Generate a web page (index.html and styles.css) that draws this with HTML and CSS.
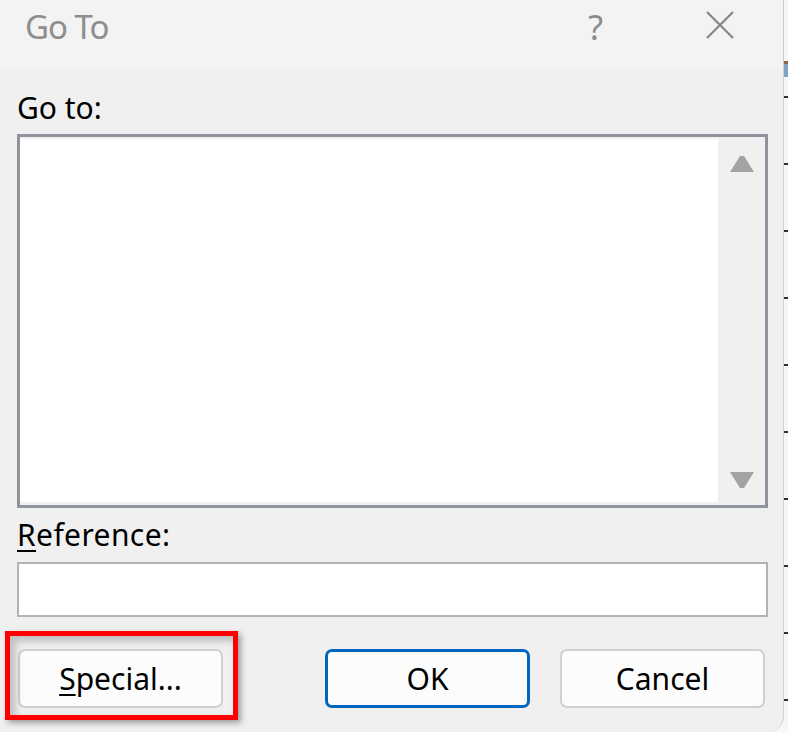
FILE: index.html
```html
<!DOCTYPE html>
<html>
<head>
<meta charset="utf-8">
<link rel="stylesheet" href="styles.css">
</head>
<body>
<div class="page">
  <div class="dialog">
    <div class="titlebar">
      <span class="title">Go To</span>
      <div class="title-actions">
        <span class="help">?</span>
        <svg class="close" width="30" height="30" viewBox="0 0 30 30"><path d="M2 2 L28 28 M28 2 L2 28" stroke="#8a8a8a" stroke-width="2.4" fill="none"/></svg>
      </div>
    </div>
    <div class="body">
      <div class="label">Go to:</div>
      <div class="listbox">
        <div class="list-area"></div>
        <div class="scrollbar">
          <svg width="24" height="18" viewBox="0 0 24 18"><path d="M10 1 L14 1 L24 17 L0 17 Z" fill="#a3a3a3"/></svg>
          <svg width="24" height="18" viewBox="0 0 24 18"><path d="M0 1 L24 1 L14 17 L10 17 Z" fill="#a3a3a3"/></svg>
        </div>
      </div>
      <div class="label label-ref"><u>R</u>eference:</div>
      <div class="input"></div>
      <div class="buttons">
        <div class="special-wrap">
          <button class="btn"><u>S</u>pecial...</button>
          <div class="highlight"></div>
        </div>
        <div class="right-buttons">
          <button class="btn btn-primary">OK</button>
          <button class="btn">Cancel</button>
        </div>
      </div>
    </div>
  </div>
  <div class="edge">
    <div class="edge-patch"></div>
    <div class="edge-marks"></div>
  </div>
</div>
</body>
</html>
```

FILE: styles.css
```css
html, body {
  margin: 0;
  padding: 0;
}
body {
  width: 788px;
  height: 732px;
  overflow: hidden;
  background: #f6f6f6;
  font-family: "Noto Sans", "Open Sans", sans-serif;
}
.page {
  display: flex;
  height: 732px;
}
.dialog {
  width: 784px;
  flex: none;
  height: 732px;
  background: #f0f0f0;
  border-right: 1px solid #cfcfcf;
  border-bottom-right-radius: 16px;
  display: flex;
  flex-direction: column;
  box-sizing: border-box;
}
.edge {
  flex: 1;
  background: #f6f6f6;
  display: flex;
  flex-direction: column;
}
.edge-patch {
  margin-top: 61px;
  height: 16px;
  background: linear-gradient(to bottom, #8a6a4a 0, #8a6a4a 3px, #7ea3c6 3px, #7ea3c6 100%);
}
.edge-marks {
  margin-top: 19px;
  flex: 1;
  background-image: linear-gradient(to bottom, #2e2e2e 0, #2e2e2e 2px, transparent 2px);
  background-size: 100% 67px;
  background-repeat: repeat-y;
}
.titlebar {
  height: 70px;
  background: #f3f3f3;
  display: flex;
  align-items: flex-start;
  justify-content: space-between;
  padding: 0 48px 0 25px;
  box-sizing: border-box;
}
.title {
  font-size: 33px;
  line-height: 40px;
  margin-top: 7px;
  color: #8e8e8e;
  letter-spacing: -1px;
}
.title-actions {
  display: flex;
  align-items: flex-start;
  gap: 102px;
  margin-top: 10px;
}
.help {
  font-size: 34px;
  line-height: 30px;
  color: #8a8a8a;
  margin-top: 2px;
}
.body {
  flex: 1;
  padding: 0 15px 0 17px;
  display: flex;
  flex-direction: column;
}
.label {
  font-size: 30px;
  line-height: 40px;
  color: #000;
  margin-top: 18px;
  height: 40px;
}
.label-ref {
  margin-top: 7px;
  letter-spacing: 0.4px;
}
.label u {
  text-decoration-thickness: 2px;
  text-underline-offset: 4px;
}
.listbox {
  margin-top: 6px;
  height: 374px;
  border: 3px solid #8f949c;
  box-sizing: border-box;
  display: flex;
  background: #f0f0f0;
}
.list-area {
  flex: 1;
  background: #fff;
  margin: 2px 0 3px 0;
}
.scrollbar {
  width: 47px;
  display: flex;
  flex-direction: column;
  align-items: center;
  justify-content: space-between;
  padding: 18px 0 16px 0;
}
.input {
  margin-top: 7px;
  height: 55px;
  border: 2px solid #b3b3b3;
  background: #fff;
  box-sizing: border-box;
}
.buttons {
  margin-top: 32px;
  display: flex;
  justify-content: space-between;
  align-items: flex-start;
}
.right-buttons {
  display: flex;
  gap: 30px;
  margin-right: 3px;
}
.special-wrap {
  position: relative;
  margin-left: 1px;
}
.btn {
  width: 205px;
  height: 59px;
  box-sizing: border-box;
  border: 2px solid #d0d0d0;
  border-radius: 7px;
  background: #fcfcfc;
  font-family: "Noto Sans", "Open Sans", sans-serif;
  font-size: 30px;
  color: #000;
  padding: 0;
  line-height: 1;
}
.btn u {
  text-decoration-thickness: 2px;
  text-underline-offset: 4px;
}
.btn-primary {
  border: 3px solid #0067c0;
}
.highlight {
  position: absolute;
  left: -13px;
  top: -18px;
  width: 233px;
  height: 89px;
  box-sizing: border-box;
  border: 5px solid #ff0000;
  box-shadow: 3px 3px 6px rgba(0,0,0,0.35), inset 5px 5px 8px rgba(0,0,0,0.22);
  pointer-events: none;
}
```
